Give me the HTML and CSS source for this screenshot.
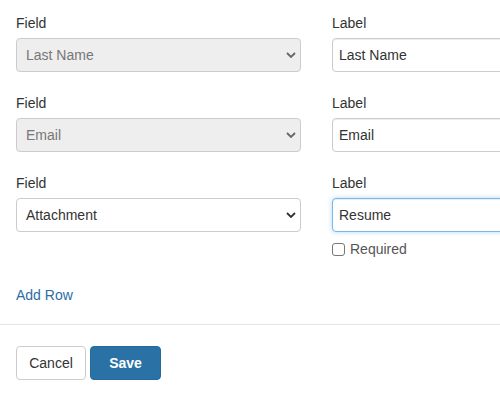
FILE: index.html
```html
<html>
<head>
<title>Fields</title>
<meta http-equiv="Content-Type" content="text/html; charset=utf-8"/>
<link rel="stylesheet" href="styles.css">
</head>
<body>
<div class="body">
  <div class="row">
    <div class="col">
      <label>Field</label>
      <div class="select disabled">Last Name
        <svg class="caret" width="10" height="6" viewBox="0 0 10 6"><path d="M1 1l4 4 4-4" fill="none" stroke="#666" stroke-width="1.8"/></svg>
      </div>
    </div>
    <div class="col">
      <label>Label</label>
      <div class="input">Last Name</div>
    </div>
  </div>
  <div class="row">
    <div class="col">
      <label>Field</label>
      <div class="select disabled">Email
        <svg class="caret" width="10" height="6" viewBox="0 0 10 6"><path d="M1 1l4 4 4-4" fill="none" stroke="#666" stroke-width="1.8"/></svg>
      </div>
    </div>
    <div class="col">
      <label>Label</label>
      <div class="input">Email</div>
    </div>
  </div>
  <div class="row">
    <div class="col">
      <label>Field</label>
      <div class="select">Attachment
        <svg class="caret" width="10" height="6" viewBox="0 0 10 6"><path d="M1 1l4 4 4-4" fill="none" stroke="#333" stroke-width="1.8"/></svg>
      </div>
    </div>
    <div class="col">
      <label>Label</label>
      <div class="input focus">Resume</div>
      <div class="check"><span class="box"></span>Required</div>
    </div>
  </div>
  <a class="add" href="#">Add Row</a>
</div>
<div class="footer">
  <button class="btn">Cancel</button>
  <button class="btn primary">Save</button>
</div>
</body>
</html>
```

FILE: styles.css
```css
body {
    margin:0;
    overflow:hidden;
    background:#fff;
    color:#333;
    font-family:"Liberation Sans", Arial, sans-serif;
    font-size:14px;
    line-height:20px;
}
.body {
    padding:13px 16px 19px;
}
.row {
    display:flex;
    gap:31px;
    margin-bottom:21px;
}
.col {
    width:285px;
    flex-shrink:0;
}
label {
    display:block;
    margin-bottom:5px;
}
.select, .input {
    box-sizing:border-box;
    height:34px;
    border:solid 1px #ccc;
    border-radius:4px;
    background:#fff;
    line-height:32px;
    color:#333;
}
.select {
    position:relative;
    padding-left:9px;
}
.select.disabled {
    background:#eee;
    color:#777;
}
.caret {
    position:absolute;
    right:4px;
    top:13px;
}
.input {
    padding-left:6px;
    box-shadow:inset 0 1px 1px rgba(0,0,0,.075);
}
.input.focus {
    border-color:#7ab8ec;
    box-shadow:inset 0 1px 1px rgba(0,0,0,.075), 0 0 5px rgba(102,175,233,.5);
}
.check {
    display:flex;
    align-items:center;
    margin-top:7px;
    color:#555;
}
.box {
    box-sizing:border-box;
    width:13px;
    height:13px;
    border:solid 1px #777;
    border-radius:3px;
    margin-right:5px;
}
.add {
    display:block;
    margin-top:26px;
    color:#2a6ea3;
    text-decoration:none;
}
.footer {
    border-top:solid 1px #e5e5e5;
    padding:21px 16px 0;
    display:flex;
    gap:4px;
}
.btn {
    box-sizing:border-box;
    height:34px;
    padding:0 12px;
    border:solid 1px #ccc;
    border-radius:4px;
    background:#fff;
    color:#333;
    font-family:"Liberation Sans", Arial, sans-serif;
    font-size:14px;
    width:70px;
}
.primary {
    width:71px;
    background:#2a72a6;
    border-color:#266a9c;
    color:#fff;
    font-weight:bold;
}
```
